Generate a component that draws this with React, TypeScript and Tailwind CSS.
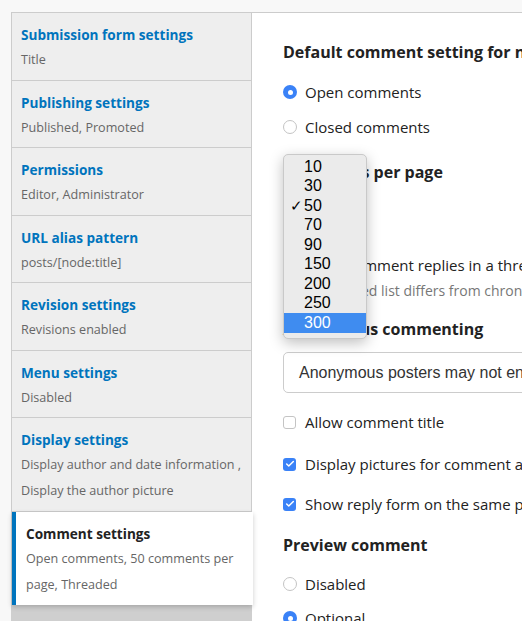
import { Check } from "lucide-react";

const tabs = [
  { title: "Submission form settings", summary: ["Title"] },
  { title: "Publishing settings", summary: ["Published, Promoted"] },
  { title: "Permissions", summary: ["Editor, Administrator"] },
  { title: "URL alias pattern", summary: ["posts/[node:title]"] },
  { title: "Revision settings", summary: ["Revisions enabled"] },
  { title: "Menu settings", summary: ["Disabled"] },
  {
    title: "Display settings",
    summary: ["Display author and date information ,", "Display the author picture"],
  },
];

const perPage = ["10", "30", "50", "70", "90", "150", "200", "250", "300"];

function Radio({ checked, label, className }: { checked?: boolean; label: string; className?: string }) {
  return (
    <label className={`flex h-5 items-center gap-2 whitespace-nowrap ${className ?? ""}`}>
      {checked ? (
        <span className="flex h-[14px] w-[14px] shrink-0 items-center justify-center rounded-full bg-[#3a82f7]">
          <span className="h-[5px] w-[5px] rounded-full bg-white" />
        </span>
      ) : (
        <span className="h-[14px] w-[14px] shrink-0 rounded-full border border-[#c4c4c4] bg-white" />
      )}
      <span className="text-[15px] text-[#222]">{label}</span>
    </label>
  );
}

function Checkbox({ checked, label, className }: { checked?: boolean; label: string; className?: string }) {
  return (
    <label className={`flex h-5 items-center gap-[9px] whitespace-nowrap ${className ?? ""}`}>
      {checked ? (
        <span className="flex h-[13px] w-[13px] shrink-0 items-center justify-center rounded-[3px] bg-[#3a82f7]">
          <Check className="h-[10px] w-[10px] text-white" strokeWidth={3.5} />
        </span>
      ) : (
        <span className="h-[13px] w-[13px] shrink-0 rounded-[3px] border border-[#c4c4c4] bg-white" />
      )}
      <span className="text-[15px] text-[#222]">{label}</span>
    </label>
  );
}

function Heading({ children, className }: { children: string; className?: string }) {
  return (
    <h3 className={`h-5 whitespace-nowrap text-[16px] leading-5 font-bold text-[#222] ${className ?? ""}`}>
      {children}
    </h3>
  );
}

export default function App() {
  return (
    <div className="h-[621px] overflow-hidden bg-[#f8f8f8] pt-3 pl-[11px] font-['Open_Sans',sans-serif]">
      <div className="flex h-full">
        {/* vertical tab menu */}
        <ul className="w-[241px] shrink-0 border-t border-[#ccc] bg-[#cfcfcf]">
          {tabs.map((tab) => (
            <li
              key={tab.title}
              className="border-x border-b border-[#ccc] bg-[#eee] pt-3 pb-[6.5px] pl-[9px]"
            >
              <a className="block h-5 text-[13.6px] leading-5 font-bold text-[#0074bd]">{tab.title}</a>
              <div className="mt-[2px] text-[12.6px] leading-[26px] text-[#666]">
                {tab.summary.map((line) => (
                  <p key={line}>{line}</p>
                ))}
              </div>
            </li>
          ))}
          <li className="relative z-10 -mr-px ml-px border-l-[4px] border-[#0074bd] bg-white pt-3 pb-[7px] pl-[10px] shadow-[0_2px_5px_rgba(0,0,0,0.2)]">
            <a className="block h-5 text-[13.6px] leading-5 font-bold text-[#222]">Comment settings</a>
            <div className="mt-[2px] text-[12.6px] leading-[26px] text-[#666]">
              <p>Open comments, 50 comments per</p>
              <p>page, Threaded</p>
            </div>
          </li>
        </ul>

        {/* comment settings pane */}
        <div className="relative min-w-0 flex-1 border-t border-[#ccc] bg-white pl-[31px]">
          <div className="flex flex-col">
            <Heading className="mt-[29px]">Default comment setting for new content</Heading>
            <Radio checked label="Open comments" className="mt-5" />
            <Radio label="Closed comments" className="mt-[15px]" />
            <Heading className="mt-[25px]">Comments per page</Heading>
            <div className="mt-[13px] flex h-[41px] w-[84px] items-center rounded-[4px] border border-[#ccc] px-[15px] font-['Liberation_Sans',sans-serif] text-[16px] text-[#333]">
              50
            </div>
            <Checkbox checked label="Show comment replies in a threaded list" className="mt-[19px]" />
            <p className="mt-[6px] pl-[22px] text-[14px] leading-5 whitespace-nowrap text-[#777]">
              A threaded list differs from chronological order
            </p>
            <Heading className="mt-[18px]">Anonymous commenting</Heading>
            <div className="mt-[13px] flex h-[41px] w-[320px] items-center rounded-[5px] border border-[#ccc] px-[15px] font-['Liberation_Sans',sans-serif] text-[16px] whitespace-nowrap text-[#333]">
              Anonymous posters may not enter their contact information
            </div>
            <Checkbox label="Allow comment title" className="mt-[19px]" />
            <Checkbox checked label="Display pictures for comment author" className="mt-[22px]" />
            <Checkbox checked label="Show reply form on the same page as comments" className="mt-5" />
            <Heading className="mt-[21px]">Preview comment</Heading>
            <Radio label="Disabled" className="mt-[19px]" />
            <Radio checked label="Optional" className="mt-[14px]" />
          </div>

          {/* open select popup */}
          <ul className="absolute top-[141px] left-[31px] w-[84px] rounded-[5px] border border-[#c9c9c9] bg-[#ebebeb] pt-[2px] pb-[5px] font-['Liberation_Sans',sans-serif] text-[16px] text-black shadow-[0_4px_14px_rgba(0,0,0,0.25)]">
            {perPage.map((n) => (
              <li
                key={n}
                className={`relative flex h-[19.5px] items-center pl-[20px] leading-none ${
                  n === "300" ? "bg-[#3f8cf0] text-white" : ""
                }`}
              >
                {n === "50" && <span className="absolute left-[6px] text-[15px]">✓</span>}
                {n}
              </li>
            ))}
          </ul>
        </div>
      </div>
    </div>
  );
}
